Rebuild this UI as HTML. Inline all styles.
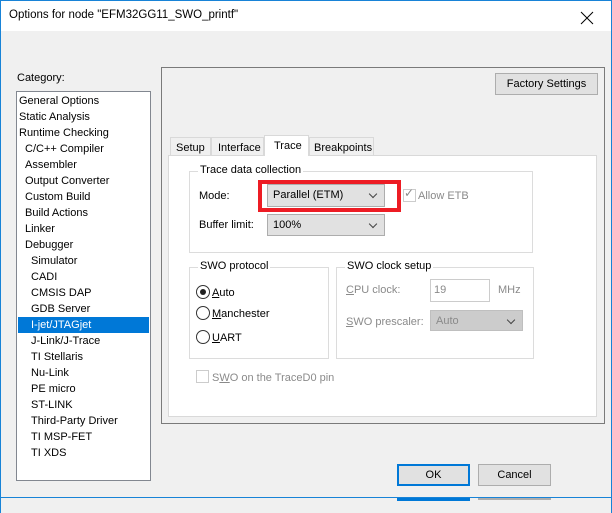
<!DOCTYPE html>
<html><head><style>
*{box-sizing:border-box;margin:0;padding:0}
body{width:612px;height:513px;background:#f0f0f0;font-family:"Liberation Sans",sans-serif;font-size:11px;color:#000;position:relative;overflow:hidden}
.a{position:absolute}
.t{position:absolute;white-space:nowrap}
.grp{position:absolute;border:1px solid #dcdcdc}
.lg{position:absolute;top:-8px;left:8px;background:#fff;padding:0 2px}
.cb{position:absolute;background:#e1e1e1;border:1px solid #adadad;padding:4px 0 0 5px}
.cb:after{content:"";position:absolute;right:8px;top:6px;width:5px;height:5px;border-right:1px solid #444;border-bottom:1px solid #444;transform:rotate(45deg)}
.btn{position:absolute;background:#e1e1e1;border:1px solid #adadad;text-align:center;padding-top:4px}
.li{position:absolute;height:16px;line-height:17px;white-space:nowrap}
.rad{position:absolute;width:14px;height:14px;border:1px solid #333;border-radius:50%;background:#fff}
.g{color:#8a8a8a}
</style></head><body>
<div class="a" style="left:0;top:0;width:612px;height:513px;border:1px solid #1883d7;border-bottom:none"></div>
<div class="a" style="left:1px;top:1px;width:610px;height:30px;background:#fff"></div>
<div class="t" style="left:9px;top:9px;font-size:11.5px">Options for node "EFM32GG11_SWO_printf"</div>
<svg class="a" style="left:580px;top:11px" width="14" height="14"><path d="M1 1L13 13M13 1L1 13" stroke="#000" stroke-width="1"/></svg>
<div class="t" style="left:17px;top:72px">Category:</div>
<div class="a" style="left:16px;top:91px;width:135px;height:390px;background:#fff;border:1px solid #828790"></div>
<div class="a" style="left:18px;top:317px;width:131px;height:16px;background:#0078d7"></div>
<div class="li" style="left:19px;top:93px">General Options</div>
<div class="li" style="left:19px;top:109px">Static Analysis</div>
<div class="li" style="left:19px;top:125px">Runtime Checking</div>
<div class="li" style="left:25px;top:141px">C/C++ Compiler</div>
<div class="li" style="left:25px;top:157px">Assembler</div>
<div class="li" style="left:25px;top:173px">Output Converter</div>
<div class="li" style="left:25px;top:189px">Custom Build</div>
<div class="li" style="left:25px;top:205px">Build Actions</div>
<div class="li" style="left:25px;top:221px">Linker</div>
<div class="li" style="left:25px;top:237px">Debugger</div>
<div class="li" style="left:31px;top:253px">Simulator</div>
<div class="li" style="left:31px;top:269px">CADI</div>
<div class="li" style="left:31px;top:285px">CMSIS DAP</div>
<div class="li" style="left:31px;top:301px">GDB Server</div>
<div class="li" style="left:31px;top:317px;color:#fff">I-jet/JTAGjet</div>
<div class="li" style="left:31px;top:333px">J-Link/J-Trace</div>
<div class="li" style="left:31px;top:349px">TI Stellaris</div>
<div class="li" style="left:31px;top:365px">Nu-Link</div>
<div class="li" style="left:31px;top:381px">PE micro</div>
<div class="li" style="left:31px;top:397px">ST-LINK</div>
<div class="li" style="left:31px;top:413px">Third-Party Driver</div>
<div class="li" style="left:31px;top:429px">TI MSP-FET</div>
<div class="li" style="left:31px;top:445px">TI XDS</div>

<div class="a" style="left:161px;top:67px;width:444px;height:357px;border:1px solid #7a7a7a"></div>
<div class="btn" style="left:495px;top:73px;width:103px;height:22px">Factory Settings</div>
<div class="a" style="left:168px;top:155px;width:429px;height:262px;background:#fff;border:1px solid #d9d9d9"></div>
<div class="a" style="left:170px;top:137px;width:41px;height:19px;border:1px solid #d9d9d9;background:#f0f0f0;padding:4px 0 0 5px">Setup</div>
<div class="a" style="left:211px;top:137px;width:53px;height:19px;border:1px solid #d9d9d9;background:#f0f0f0;padding:4px 0 0 6px">Interface</div>
<div class="a" style="left:264px;top:135px;width:45px;height:21px;border:1px solid #d9d9d9;border-bottom:none;background:#fff;padding:4px 0 0 9px">Trace</div>
<div class="a" style="left:309px;top:137px;width:65px;height:19px;border:1px solid #d9d9d9;background:#f0f0f0;padding:4px 0 0 4px">Breakpoints</div>

<div class="grp" style="left:189px;top:171px;width:344px;height:82px"><span class="lg">Trace data collection</span></div>
<div class="t" style="left:199px;top:190px">Mode:</div>
<div class="a" style="left:258px;top:180px;width:143px;height:32px;border:4px solid #ed1c24"></div>
<div class="cb" style="left:267px;top:184px;width:118px;height:23px">Parallel (ETM)</div>
<div class="a" style="left:403px;top:189px;width:13px;height:13px;border:1px solid #ccc"></div>
<div class="t g" style="left:404px;top:186px;font-size:12px">✓</div>
<div class="t g" style="left:418px;top:190px">Allow ETB</div>
<div class="t" style="left:199px;top:219px">Buffer limit:</div>
<div class="cb" style="left:267px;top:214px;width:118px;height:22px">100%</div>

<div class="grp" style="left:189px;top:267px;width:140px;height:92px"><span class="lg">SWO protocol</span></div>
<div class="rad" style="left:196px;top:285px"></div><div class="a" style="left:200px;top:289px;width:6px;height:6px;border-radius:50%;background:#222"></div>
<div class="t" style="left:212px;top:287px"><u>A</u>uto</div>
<div class="rad" style="left:196px;top:306px"></div>
<div class="t" style="left:212px;top:308px"><u>M</u>anchester</div>
<div class="rad" style="left:196px;top:330px"></div>
<div class="t" style="left:212px;top:332px"><u>U</u>ART</div>

<div class="grp" style="left:336px;top:267px;width:198px;height:92px"><span class="lg">SWO clock setup</span></div>
<div class="t g" style="left:346px;top:284px"><u>C</u>PU clock:</div>
<div class="a" style="left:430px;top:279px;width:60px;height:23px;border:1px solid #ccc;background:#fff;padding:4px 0 0 3px;color:#8a8a8a">19</div>
<div class="t g" style="left:498px;top:284px">MHz</div>
<div class="t g" style="left:346px;top:316px"><u>S</u>WO prescaler:</div>
<div class="cb" style="left:430px;top:310px;width:93px;height:21px;background:#ccc;border-color:#bfbfbf;color:#8a8a8a">Auto</div>
<div class="a" style="left:196px;top:370px;width:13px;height:13px;border:1px solid #ccc"></div>
<div class="t g" style="left:212px;top:372px">S<u>W</u>O on the TraceD0 pin</div>

<div class="btn" style="left:397px;top:464px;width:73px;height:22px;border:2px solid #0078d7;padding-top:3px">OK</div>
<div class="btn" style="left:478px;top:464px;width:73px;height:22px">Cancel</div>
<div class="a" style="left:0;top:497px;width:612px;height:1px;background:#1883d7"></div>
<div class="a" style="left:397px;top:498px;width:73px;height:3px;background:#0078d7"></div>
<div class="a" style="left:478px;top:498px;width:73px;height:2px;background:#adadad"></div>
</body></html>
